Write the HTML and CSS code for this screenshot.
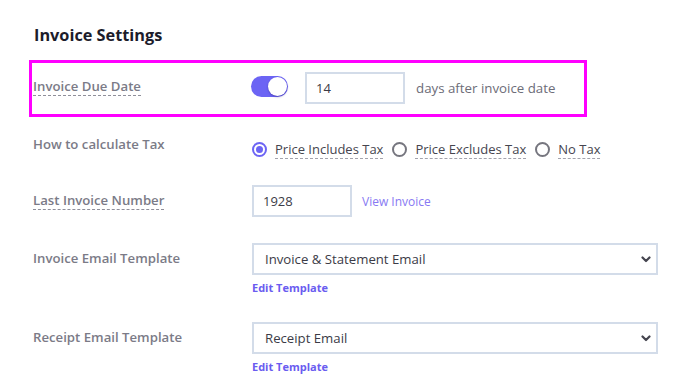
FILE: index.html
```html
<!DOCTYPE html>
<html lang="en">
<head>
<meta charset="utf-8">
<title>Invoice Settings</title>
<link rel="stylesheet" href="styles.css">
</head>
<body>
<main class="page">
  <h1 class="title">Invoice Settings</h1>

  <div class="row row--highlight">
    <div class="row__label row__label--tight"><span class="dotted">Invoice Due Date</span></div>
    <div class="row__control row__control--inline">
      <span class="toggle"><span class="toggle__knob"></span></span>
      <input class="field field--short field--due" type="text" value="14">
      <span class="hint">days after invoice date</span>
    </div>
  </div>

  <div class="row row--tax">
    <div class="row__label">How to calculate Tax</div>
    <div class="radio-group">
      <label class="radio"><span class="radio__dot radio__dot--on"></span><span class="dotted dotted--light">Price Includes Tax</span></label>
      <label class="radio"><span class="radio__dot"></span><span class="dotted dotted--light">Price Excludes Tax</span></label>
      <label class="radio"><span class="radio__dot"></span><span class="dotted dotted--light">No Tax</span></label>
    </div>
  </div>

  <div class="row">
    <div class="row__label"><span class="dotted">Last Invoice Number</span></div>
    <div class="row__control row__control--inline">
      <input class="field field--short" type="text" value="1928">
      <a class="link" href="#">View Invoice</a>
    </div>
  </div>

  <div class="row">
    <div class="row__label">Invoice Email Template</div>
    <div class="row__control">
      <div class="select">
        <select class="select__input"><option>Invoice &amp; Statement Email</option></select>
        <svg class="select__chevron" width="10" height="7" viewBox="0 0 10 7"><path d="M1.5 1.5 L5 5 L8.5 1.5" fill="none" stroke="#45454f" stroke-width="2.2" stroke-linecap="round" stroke-linejoin="round"/></svg>
      </div>
      <a class="edit-link" href="#">Edit Template</a>
    </div>
  </div>

  <div class="row">
    <div class="row__label">Receipt Email Template</div>
    <div class="row__control">
      <div class="select">
        <select class="select__input"><option>Receipt Email</option></select>
        <svg class="select__chevron" width="10" height="7" viewBox="0 0 10 7"><path d="M1.5 1.5 L5 5 L8.5 1.5" fill="none" stroke="#45454f" stroke-width="2.2" stroke-linecap="round" stroke-linejoin="round"/></svg>
      </div>
      <a class="edit-link" href="#">Edit Template</a>
    </div>
  </div>
</main>
</body>
</html>
```

FILE: styles.css
```css
* { box-sizing: border-box; }

html, body {
  margin: 0;
  background: #ffffff;
}

body {
  font-family: "Open Sans", "Noto Sans", sans-serif;
  color: #3b3b46;
}

.page {
  padding: 24px 0 0 33px;
}

.title {
  margin: 0 0 14px 1px;
  font-size: 16.3px;
  line-height: 22px;
  font-weight: 700;
  color: #1c1c2b;
}

.row {
  display: flex;
  align-items: flex-start;
  margin-bottom: 26px;
}

.row--highlight {
  width: 558px;
  margin-left: -4px;
  margin-bottom: 18px;
  padding: 9px 0 10px 1px;
  border: 3px solid #ff00ff;
}

.row__label {
  flex: none;
  width: 219px;
  padding-top: 6px;
  font-size: 13.2px;
  line-height: 18px;
  font-weight: 600;
  color: #7b7b87;
}

.row__label--tight {
  padding-top: 5px;
}

.row--tax .row__label {
  padding-top: 0;
}

.dotted {
  border-bottom: 1px dashed #8f8f9a;
}

.dotted--light {
  border-bottom-color: #a3a3ad;
}

.row__control {
  display: flex;
  flex-direction: column;
  align-items: flex-start;
}

.row__control--inline {
  flex-direction: row;
  align-items: center;
}

.toggle {
  position: relative;
  flex: none;
  width: 37px;
  height: 21px;
  margin: 0 17px 3px -1px;
  border-radius: 11px;
  background: #6c64f4;
}

.toggle__knob {
  position: absolute;
  top: 1px;
  right: 1px;
  width: 19px;
  height: 19px;
  border-radius: 50%;
  background: #ffffff;
  box-shadow: 0 1px 2px rgba(40, 30, 120, 0.45);
}

.field {
  height: 32px;
  padding: 0 9px;
  border: 2px solid #d3dce9;
  border-radius: 0;
  font-family: inherit;
  font-size: 13px;
  color: #3b3b46;
  background: #ffffff;
  outline: none;
}

.field--short {
  width: 100px;
}

.hint {
  margin-left: 11px;
  font-size: 13.3px;
  line-height: 18px;
  color: #6d6d78;
}

.radio-group {
  display: flex;
  align-items: center;
  margin-top: 4px;
  height: 20px;
}

.radio {
  display: flex;
  align-items: center;
  gap: 8px;
  margin-right: 9px;
  font-size: 13px;
  line-height: 18px;
  color: #45454f;
  cursor: pointer;
}

.radio__dot {
  position: relative;
  flex: none;
  width: 15px;
  height: 15px;
  border: 2px solid #76767f;
  border-radius: 50%;
}

.radio__dot--on {
  border-color: #6c64f4;
}

.radio__dot--on::after {
  content: "";
  position: absolute;
  top: 2px;
  left: 2px;
  width: 7px;
  height: 7px;
  border-radius: 50%;
  background: #6c64f4;
}

.link {
  margin-left: 10px;
  font-size: 12px;
  line-height: 17px;
  color: #8879f3;
  text-decoration: none;
}

.select {
  position: relative;
  width: 406px;
}

.select__input {
  display: block;
  width: 100%;
  height: 32px;
  padding: 0 30px 0 11px;
  border: 2px solid #d3dce9;
  border-radius: 0;
  font-family: inherit;
  font-size: 13.2px;
  color: #3b3b46;
  background: #ffffff;
  appearance: none;
  -webkit-appearance: none;
  outline: none;
}

.select__chevron {
  position: absolute;
  top: 13px;
  right: 7px;
  pointer-events: none;
}

.edit-link {
  margin-top: 4px;
  font-size: 11px;
  line-height: 17px;
  font-weight: 700;
  color: #6a5cf0;
  text-decoration: none;
}
```
